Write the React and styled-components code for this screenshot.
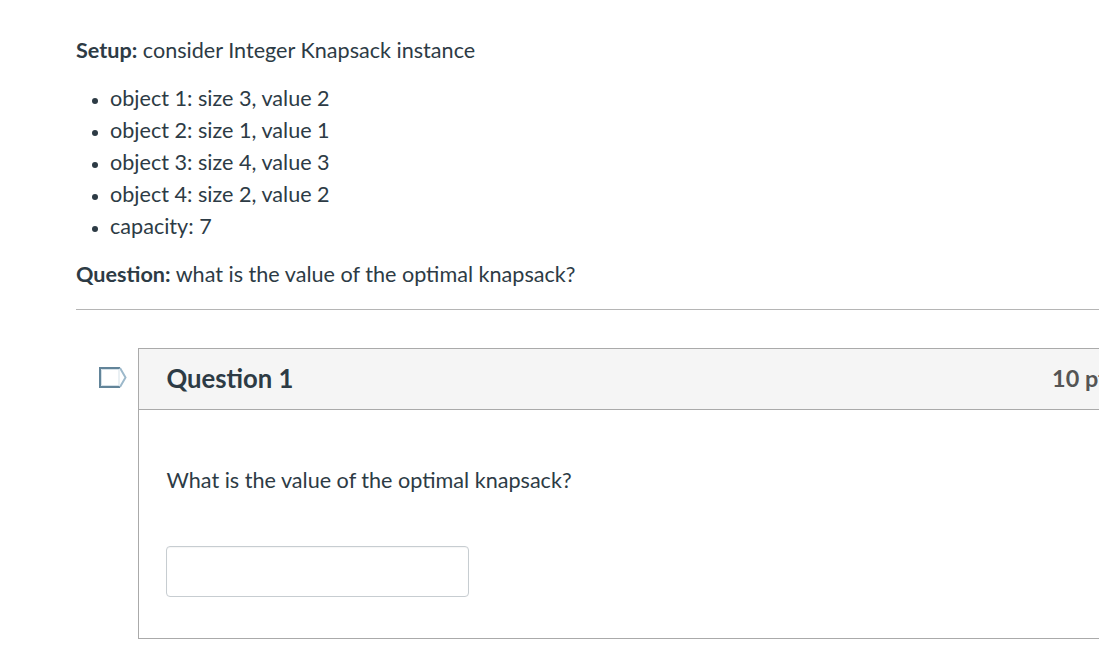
import React from "react";
import styled, { createGlobalStyle } from "styled-components";

const Global = createGlobalStyle`
  html, body { margin: 0; padding: 0; background: #fff; overflow: hidden; }
  body { font-family: Lato, "Open Sans", sans-serif; color: #2d3b45; }
`;

const Page = styled.main`
  width: 1200px;
  padding: 34px 0 0 76px;
  font-size: 21.6px;
  line-height: 32px;
`;

const Paragraph = styled.p`
  margin: 0;
`;

const Items = styled.ul`
  margin: 16px 0;
  padding: 0 0 0 34px;

  li::marker {
    font-size: 17px;
  }
`;

const Rule = styled.hr`
  width: 1124px;
  margin: 19px 0 38px;
  border: 0;
  border-top: 1px solid #b5b5b5;
`;

const QuestionRow = styled.section`
  display: flex;
  align-items: flex-start;
`;

const Flag = styled.div`
  width: 62px;
  flex: none;
  padding: 19px 0 0 23px;
  box-sizing: border-box;
  line-height: 0;
`;

const Card = styled.article`
  width: 1007px;
  height: 291px;
  box-sizing: border-box;
  border: 1px solid #aaa;
  border-right: 0;
`;

const CardHeader = styled.header`
  display: flex;
  align-items: center;
  justify-content: space-between;
  height: 61px;
  box-sizing: border-box;
  padding: 0 28px 3px 27.5px;
  background: #f5f5f5;
  border-bottom: 1px solid #aaa;
`;

const Title = styled.h2`
  margin: 0;
  font-size: 25.7px;
  font-weight: 700;
  line-height: 32px;
`;

const Points = styled.span`
  font-size: 23.4px;
  font-weight: 700;
  color: #555;
`;

const CardBody = styled.div`
  padding: 54px 28px 0 27.5px;
`;

const Answer = styled.input`
  display: block;
  width: 303px;
  height: 51px;
  box-sizing: border-box;
  margin: 50px 0 0 -0.5px;
  background: #fff;
  border: 1px solid #c7cdd1;
  border-radius: 4px;
  box-shadow: inset 0 1px 1px rgba(0, 0, 0, 0.04);
`;

export default function App() {
  return (
    <>
      <Global />
      <Page>
        <Paragraph><strong>Setup:</strong> consider Integer Knapsack instance</Paragraph>
        <Items>
          <li>object 1: size 3, value 2</li>
          <li>object 2: size 1, value 1</li>
          <li>object 3: size 4, value 3</li>
          <li>object 4: size 2, value 2</li>
          <li>capacity: 7</li>
        </Items>
        <Paragraph><strong>Question:</strong> what is the value of the optimal knapsack?</Paragraph>
        <Rule />
        <QuestionRow>
          <Flag>
            <svg width="28" height="21" viewBox="0 0 28 21" fill="none">
              <path d="M21 1H1V20H21" stroke="#628499" strokeWidth="2" />
              <path d="M21 1L26.5 10.5L21 20" stroke="#9db9cb" strokeWidth="2" />
              <path d="M2.5 2.5H20V18.5H2.5Z" stroke="#d5e1e8" strokeWidth="1" />
            </svg>
          </Flag>
          <Card>
            <CardHeader>
              <Title>Question 1</Title>
              <Points>10 pts</Points>
            </CardHeader>
            <CardBody>
              <Paragraph>What is the value of the optimal knapsack?</Paragraph>
              <Answer type="text" aria-label="Answer" />
            </CardBody>
          </Card>
        </QuestionRow>
      </Page>
    </>
  );
}
